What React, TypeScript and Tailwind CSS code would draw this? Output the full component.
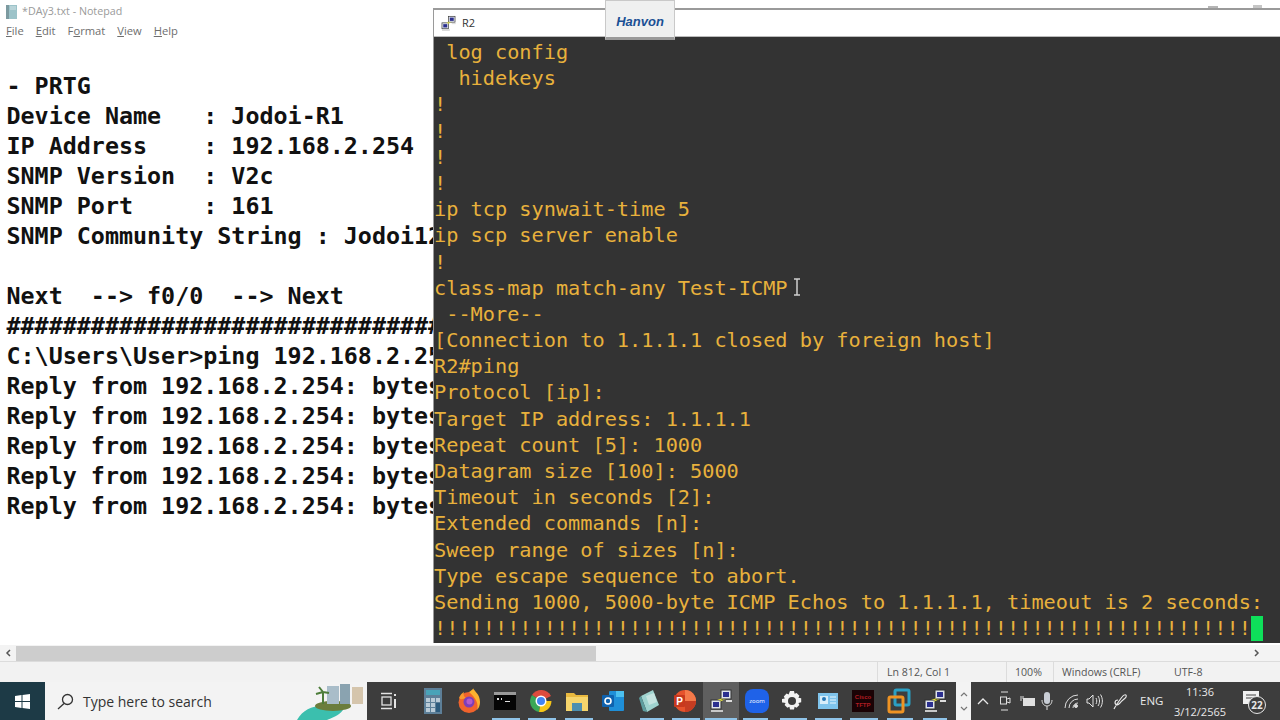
const ui = { fontFamily: '"Open Sans","Noto Sans",sans-serif' };

const notepadLines = [
  "",
  "- PRTG",
  "Device Name   : Jodoi-R1",
  "IP Address    : 192.168.2.254",
  "SNMP Version  : V2c",
  "SNMP Port     : 161",
  "SNMP Community String : Jodoi12",
  "",
  "Next  --> f0/0  --> Next",
  "###############################",
  "C:\\Users\\User>ping 192.168.2.25",
  "Reply from 192.168.2.254: bytes",
  "Reply from 192.168.2.254: bytes",
  "Reply from 192.168.2.254: bytes",
  "Reply from 192.168.2.254: bytes",
  "Reply from 192.168.2.254: bytes",
];

const termLines = [
  " log config",
  "  hidekeys",
  "!",
  "!",
  "!",
  "!",
  "ip tcp synwait-time 5",
  "ip scp server enable",
  "!",
  "class-map match-any Test-ICMP",
  " --More--",
  "[Connection to 1.1.1.1 closed by foreign host]",
  "R2#ping",
  "Protocol [ip]:",
  "Target IP address: 1.1.1.1",
  "Repeat count [5]: 1000",
  "Datagram size [100]: 5000",
  "Timeout in seconds [2]:",
  "Extended commands [n]:",
  "Sweep range of sizes [n]:",
  "Type escape sequence to abort.",
  "Sending 1000, 5000-byte ICMP Echos to 1.1.1.1, timeout is 2 seconds:",
];

function Putty({ size = 26 }: { size?: number }) {
  return (
    <svg width={size} height={size} viewBox="0 0 26 26" className="shrink-0">
      <rect x="13" y="2" width="10" height="9" fill="#dfe3ea" stroke="#333" />
      <rect x="15" y="4" width="6" height="5" fill="#2b2f8f" />
      <rect x="3" y="12" width="10" height="9" fill="#dfe3ea" stroke="#333" />
      <rect x="5" y="14" width="6" height="5" fill="#2b2f8f" />
      <rect x="3" y="22" width="12" height="2" fill="#c8c8c8" />
      <path d="M9 12l6-2-2 2 5-1-7 3 2-2z" fill="#e6e23a" />
      <rect x="18" y="12" width="6" height="2" fill="#ddd" />
    </svg>
  );
}

function TaskIcon({ children, active }: { children: React.ReactNode; active?: boolean }) {
  return (
    <div className={`w-[36px] h-[38px] shrink-0 flex items-center justify-center ${active ? "bg-[#5f5f5f]" : ""}`}>
      {children}
    </div>
  );
}

function TaskIcons() {
  return (
    <div className="w-[589px] shrink-0 flex items-center pl-[4px]">
      <TaskIcon>
        <svg width="20" height="20" viewBox="0 0 20 20" fill="none" stroke="#e4e4e4" strokeWidth="1.3">
          <path d="M2 2.5h11M2 17.5h11" />
          <rect x="3" y="6" width="9" height="8" />
          <path d="M16 3v2M16 8v9" strokeWidth="2" />
        </svg>
      </TaskIcon>
      <div className="w-[8px] shrink-0" />
      <TaskIcon>
        <svg width="18" height="26" viewBox="0 0 18 26">
          <rect width="18" height="26" fill="#5d7f98" />
          <rect x="2" y="2" width="14" height="5" fill="#49a3b8" />
          <path d="M2 10h4v4H2zM7 10h4v4H7zM12 10h4v4h-4zM2 15h4v4H2zM7 15h4v4H7zM2 20h4v4H2zM7 20h4v4H7z" fill="#b9cad6" />
          <rect x="12" y="15" width="4" height="9" fill="#2d5b7d" />
        </svg>
      </TaskIcon>
      <TaskIcon>
        <svg width="24" height="26" viewBox="0 0 24 26">
          <circle cx="12" cy="14.5" r="10.5" fill="#f0632c" />
          <path d="M12 4c5-3 4-4 4-4 1 3 7 6 7 14 0 3-1 6-3 8 2-6-1-12-8-18z" fill="#fcb22f" />
          <path d="M2 10c1-3 3-5 5-6-1 3 0 5 2 6-3 1-5 2-7 0z" fill="#f89a2e" />
          <circle cx="12" cy="14" r="5.5" fill="#7c3fb8" />
          <circle cx="12.5" cy="13.5" r="3" fill="#b35bc9" />
        </svg>
      </TaskIcon>
      <TaskIcon>
        <svg width="22" height="18" viewBox="0 0 22 18">
          <rect width="22" height="18" fill="#050505" />
          <rect width="22" height="3" fill="#9a9a9a" />
          <path d="M3 6h2v2H3zM7 6h1v2H7zM11 9h5v1h-5z" fill="#e0e0e0" />
        </svg>
      </TaskIcon>
      <TaskIcon>
        <svg width="24" height="24" viewBox="0 0 24 24">
          <path d="M12 12L3 6a11 11 0 0 1 19 1z" fill="#dd4b3e" />
          <path d="M12 12L3 6a11 11 0 0 0 7 17z" fill="#3aa757" />
          <path d="M12 12h10.500a11 11 0 0 1-12.500 11z" fill="#f5c518" />
          <circle cx="12" cy="12" r="5.500" fill="#fff" />
          <circle cx="12" cy="12" r="4" fill="#4285f4" />
        </svg>
      </TaskIcon>
      <TaskIcon>
        <svg width="22" height="20" viewBox="0 0 22 20">
          <path d="M0 2h8l2 2h12v3H0z" fill="#e9b93f" />
          <rect y="6" width="22" height="14" fill="#f6d56c" />
          <rect x="6" y="12" width="10" height="8" fill="#4d8fb0" />
        </svg>
      </TaskIcon>
      <TaskIcon>
        <svg width="22" height="22" viewBox="0 0 22 22">
          <rect x="7" y="1" width="15" height="20" rx="1" fill="#1f8fd8" />
          <rect x="14" y="1" width="8" height="6" fill="#4cc0ef" />
          <rect y="5" width="12" height="12" rx="1" fill="#0f62ae" />
          <circle cx="6" cy="11" r="3" fill="none" stroke="#fff" strokeWidth="1.600" />
        </svg>
      </TaskIcon>
      <TaskIcon>
        <svg width="22" height="24" viewBox="0 0 22 24">
          <path d="M3 7L15 1l6 15-12 7z" fill="#9fd3cf" />
          <path d="M3 7l6 16-4-1L1 9z" fill="#5e9d9f" />
          <path d="M8 7l8-3 3 9-8 3z" fill="#c6e4e0" />
        </svg>
      </TaskIcon>
      <TaskIcon>
        <svg width="24" height="24" viewBox="0 0 24 24">
          <circle cx="12" cy="12" r="11" fill="#e6532c" />
          <path d="M12 1a11 11 0 0 1 11 11H12z" fill="#f47a4a" />
          <path d="M12 12h11a11 11 0 0 1-11 11z" fill="#c63d22" />
          <rect x="1" y="6" width="11" height="12" rx="1" fill="#c8391e" />
          <text x="6.500" y="15.500" fontSize="10" fontWeight="700" textAnchor="middle" fill="#fff" fontFamily="Liberation Sans">P</text>
        </svg>
      </TaskIcon>
      <TaskIcon active>
        <Putty />
      </TaskIcon>
      <TaskIcon>
        <div className="w-[24px] h-[24px] rounded-[8px] bg-[#1f62e8] flex items-center justify-center text-[6px] text-white" style={ui}>
          zoom
        </div>
      </TaskIcon>
      <div className="-ml-[1px]" />
      <TaskIcon>
        <svg width="20" height="20" viewBox="0 0 20 20">
          <path
            fillRule="evenodd"
            fill="#f2f2f2"
            d="M8 0h4l.6 2.800 2-.900 2.800 2.800-1 2 2.800.600v4l-2.800.600 1 2-2.800 2.800-2-1-.600 2.800H8l-.6-2.800-2 1-2.800-2.800 1-2L.8 11.400H0V8l2.800-.6-1-2 2.800-2.800 2 1zM10 6a4 4 0 1 0 0 8 4 4 0 0 0 0-8z"
          />
        </svg>
      </TaskIcon>
      <TaskIcon>
        <svg width="20" height="16" viewBox="0 0 20 16">
          <rect width="20" height="16" fill="#7fc4ec" />
          <rect x="2" y="3" width="8" height="8" fill="#d8eefa" />
          <circle cx="6" cy="6" r="2" fill="#2677b5" />
          <path d="M12 4h6M12 7h6M12 10h6" stroke="#eaf6fd" />
        </svg>
      </TaskIcon>
      <div className="-ml-[1px]" />
      <TaskIcon>
        <div className="w-[22px] h-[22px] bg-[#1a0205] flex flex-col items-center justify-center text-[6px] leading-[8px] font-bold text-[#b01c22]" style={{ fontFamily: '"Liberation Sans",sans-serif' }}>
          <span>Cisco</span>
          <span>TFTP</span>
        </div>
      </TaskIcon>
      <TaskIcon>
        <svg width="24" height="26" viewBox="0 0 24 26" fill="none">
          <rect x="8" y="2" width="14" height="15" rx="1.500" stroke="#2ba0c4" strokeWidth="3" />
          <rect x="2" y="9" width="14" height="15" rx="1.500" stroke="#ef9323" strokeWidth="3" />
        </svg>
      </TaskIcon>
      <TaskIcon>
        <Putty />
      </TaskIcon>
    </div>
  );
}

function Tray() {
  return (
    <div className="flex items-center h-full text-[#e8e8e8] pl-[6px] flex-1">
      <svg width="12" height="8" viewBox="0 0 12 8" fill="none" stroke="#e8e8e8" strokeWidth="1.300" className="mr-[10px] shrink-0">
        <path d="M1 7l5-5 5 5" />
      </svg>
      <svg width="12" height="20" viewBox="0 0 12 20" fill="none" stroke="#e0e0e0" className="mr-[9px] shrink-0">
        <path d="M2 1h7M2 19h7" />
        <rect x="1.500" y="6" width="6" height="7" />
        <path d="M8 8l3-1v5l-3-1" />
      </svg>
      <svg width="15" height="12" viewBox="0 0 15 12" className="mr-[6px] shrink-0">
        <rect x="3" y="3" width="12" height="8" fill="#e0e0e0" />
        <path d="M1 1v5M3 1v3" stroke="#ddd" />
      </svg>
      <svg width="12" height="20" viewBox="0 0 12 20" className="mr-[11px] shrink-0">
        <rect x="3" y="1" width="6" height="12" rx="3" fill="#c9ced6" />
        <path d="M1 9c0 8 10 8 10 0M6 15v4" stroke="#e0e0e0" fill="none" />
      </svg>
      <svg width="15" height="15" viewBox="0 0 15 15" fill="none" stroke="#dcdcdc" className="mr-[7px] shrink-0">
        <path d="M1 14A13 13 0 0 1 14 1M5 14a9 9 0 0 1 9-9M9 14a5 5 0 0 1 5-5" />
        <circle cx="12" cy="12" r="1.500" fill="#dcdcdc" />
      </svg>
      <svg width="17" height="16" viewBox="0 0 17 16" fill="none" stroke="#e4e4e4" className="mr-[9px] shrink-0">
        <path d="M1 6h2l4-4v12l-4-4H1zM10 5c1 2 1 4 0 6M12 3c2 3 2 7 0 10M14.500 1.500c2.500 4 2.500 9 0 13" />
      </svg>
      <svg width="16" height="18" viewBox="0 0 16 18" fill="none" stroke="#e8e8e8" strokeWidth="1.200" className="mr-[12px] shrink-0">
        <path d="M2 17c2-4 5-8 8-12 2-3 5-3 4 0-1 2-4 3-6 6-2 2-4 3-5 0 0-2 1-3 3-3" />
      </svg>
      <span className="w-[26px] text-[11.500px] mr-[2px] shrink-0" style={ui}>ENG</span>
      <div className="w-[64px] shrink-0 flex flex-col items-center text-[11px] leading-[20px] pt-[1px]" style={ui}>
        <span>11:36</span>
        <span>3/12/2565</span>
      </div>
      <div className="flex-1 relative h-full">
        <svg width="18" height="18" viewBox="0 0 18 18" className="absolute left-[10px] top-[8px]">
          <rect x="1" y="1" width="16" height="13" fill="#f1f1f1" />
          <path d="M4 5h10M4 8h10" stroke="#444" />
        </svg>
        <span className="absolute left-[16px] top-[14px] w-[18px] h-[18px] rounded-full bg-[#3d3d3d] border border-[#e8e8e8] text-[10px] font-bold leading-[16px] text-center" style={ui}>22</span>
      </div>
    </div>
  );
}

export default function App() {
  return (
    <div className="w-[1280px] h-[720px] overflow-hidden relative flex flex-col bg-white" style={ui}>
      {/* Notepad */}
      <div className="h-[22px] flex items-center pl-[5px] pt-[1px] gap-[3px] text-[10.700px] text-[#9a9a9a] bg-white">
        <svg width="14" height="16" viewBox="0 0 14 16">
          <rect x="1" y="1" width="11" height="14" fill="#9cc3c9" />
          <path d="M1 1h3v14H1z" fill="#7c9aa0" />
          <path d="M5 3h6M5 5h6" stroke="#d5e5e8" />
        </svg>
        <span>*DAy3.txt - Notepad</span>
      </div>
      <div className="h-[19px] flex items-center gap-[12px] pl-[6px] text-[11.200px] text-[#6e6e6e] bg-white">
        <span><u>F</u>ile</span>
        <span><u>E</u>dit</span>
        <span>F<u>o</u>rmat</span>
        <span><u>V</u>iew</span>
        <span><u>H</u>elp</span>
      </div>
      <div className="w-[433px] h-[604px] overflow-hidden pl-[6.500px] whitespace-pre font-bold text-[23.350px] leading-[30px] text-[#111]" style={{ fontFamily: '"DejaVu Sans Mono",monospace' }}>
        {notepadLines.map((l, i) => (
          <div key={i} className="h-[30px]">{l}</div>
        ))}
      </div>
      <div className="h-[17px] flex items-center bg-[#f3f3f3] border-b border-[#dcdcdc]">
        <div className="w-[16px] flex justify-center">
          <svg width="6" height="8" viewBox="0 0 6 8" fill="none" stroke="#555" strokeWidth="1.500"><path d="M5 1L2 4l3 3" /></svg>
        </div>
        <div className="w-[580px] h-[15px] bg-[#cdcdcd]" />
        <div className="ml-auto w-[16px] mr-[15px] flex justify-center">
          <svg width="6" height="8" viewBox="0 0 6 8" fill="none" stroke="#555" strokeWidth="1.500"><path d="M1 1l3 3-3 3" /></svg>
        </div>
      </div>
      <div className="h-[20px] flex items-center bg-[#f2f2f2] text-[10.600px] leading-[14px] text-[#555]">
        <div className="w-[877px]" />
        <div className="w-[129px] h-full border-l border-[#dcdcdc] pl-[9px] flex items-center">Ln 812, Col 1</div>
        <div className="w-[47px] h-full border-l border-[#dcdcdc] pl-[8px] flex items-center">100%</div>
        <div className="w-[112px] h-full border-l border-[#dcdcdc] pl-[8px] flex items-center">Windows (CRLF)</div>
        <div className="pl-[9px] flex items-center">UTF-8</div>
      </div>

      {/* Taskbar */}
      <div className="h-[38px] flex items-stretch bg-[#3d3d3d] relative">
        <div className="w-[45px] shrink-0 bg-[#1d3a46] flex items-center justify-center">
          <svg width="15" height="15" viewBox="0 0 15 15" fill="#fff">
            <path d="M0 2l6.500-1v6H0zM7.500 1L15 0v7H7.500zM0 8h6.500v6L0 13zM7.500 8H15v7l-7.500-1z" />
          </svg>
        </div>
        <div className="w-[322px] shrink-0 bg-[#f3f3f3] flex items-center pl-[12px] relative overflow-hidden">
          <svg width="17" height="17" viewBox="0 0 17 17" fill="none" stroke="#333" strokeWidth="1.300">
            <circle cx="10.500" cy="6.500" r="5" />
            <path d="M7 10.500L1 16" />
          </svg>
          <span className="ml-[9px] text-[14px] text-[#333]">Type here to search</span>
          <svg width="70" height="38" viewBox="0 0 70 38" className="absolute right-0 top-0">
            <path d="M0 38C6 28 14 24 26 24L46 28C42 34 34 36 30 38z" fill="#3bbfae" />
            <ellipse cx="36" cy="24" rx="18" ry="5" fill="#6b7d3c" />
            <rect x="30" y="4" width="12" height="18" fill="#a9bdc9" />
            <rect x="43" y="2" width="10" height="20" fill="#8aa3b0" />
            <rect x="55" y="5" width="11" height="17" fill="#d5c5ac" />
            <path d="M26 22V10M26 10l-7 2M26 10l6 1M26 10l-4-5" stroke="#4d7d3a" strokeWidth="2" fill="none" />
          </svg>
        </div>
        <TaskIcons />
        <div className="w-[15px] shrink-0 flex flex-col items-center justify-center gap-[9px] bg-[#f3f3f3]">
          <svg width="8" height="5" viewBox="0 0 8 5" fill="none" stroke="#777" strokeWidth="1.200"><path d="M1 4l3-3 3 3" /></svg>
          <svg width="8" height="5" viewBox="0 0 8 5" fill="none" stroke="#777" strokeWidth="1.200"><path d="M1 1l3 3 3-3" /></svg>
        </div>
        <Tray />
        {/* running-app underlines */}
        {[
          [492, 28], [528, 28], [565, 28], [640, 24], [672, 28], [705, 32], [743, 25], [780, 27], [815, 27], [850, 28], [887, 26], [923, 24],
        ].map(([x, w]) => (
          <div key={x} className="absolute bottom-0 h-[2px] bg-[#8fc3e8]" style={{ left: x, width: w }} />
        ))}
      </div>

      {/* Notepad window controls peeking above the PuTTY window */}
      <div className="absolute left-[1208px] top-[6px] w-[10px] h-[2px] bg-[#b5b5b5]" />
      <div className="absolute left-[1253px] top-[5px] w-[9px] h-[3px] bg-[#c5c5c5]" />

      {/* PuTTY window */}
      <div className="absolute left-[433px] top-[8px] w-[847px] h-[635px] flex flex-col border-t-2 border-l border-[#9a9a9a]">
        <div className="h-[27px] bg-white flex items-center pl-[6px] gap-[5px] text-[11px] text-[#333] border-b border-[#bbb]">
          <Putty size={17} />
          <span>R2</span>
        </div>
        <div className="flex-1 bg-[#333333] overflow-hidden pt-[2px] whitespace-pre text-[20.250px] leading-[26.200px] text-[#e8b13c]" style={{ fontFamily: '"DejaVu Sans Mono",monospace' }}>
          {termLines.map((l, i) => (
            <div key={i} className="h-[26.200px]">{l}</div>
          ))}
          <div className="h-[26.200px] flex items-center">
            <span>{"!".repeat(67)}</span>
            <span className="w-[12px] h-[25px] bg-[#0ee05a]" />
          </div>
        </div>
      </div>

      {/* Hanvon tab */}
      <div className="absolute left-[605px] top-0 w-[70px] h-[40px] pt-[5px] bg-[#eff0f0] border border-[#c9c9c9] border-b-[3px] border-b-[#9a9a9a] flex items-center justify-center">
        <span className="text-[13px] font-bold italic text-[#1a4f94]" style={{ fontFamily: '"Liberation Sans",sans-serif' }}>Hanvon</span>
      </div>

      {/* I-beam cursor */}
      <svg width="8" height="18" viewBox="0 0 8 18" className="absolute left-[793px] top-[278px]" fill="none" stroke="#cfcfcf" strokeWidth="1.500">
        <path d="M1 1h6M1 17h6M4 1v16" />
      </svg>
    </div>
  );
}
